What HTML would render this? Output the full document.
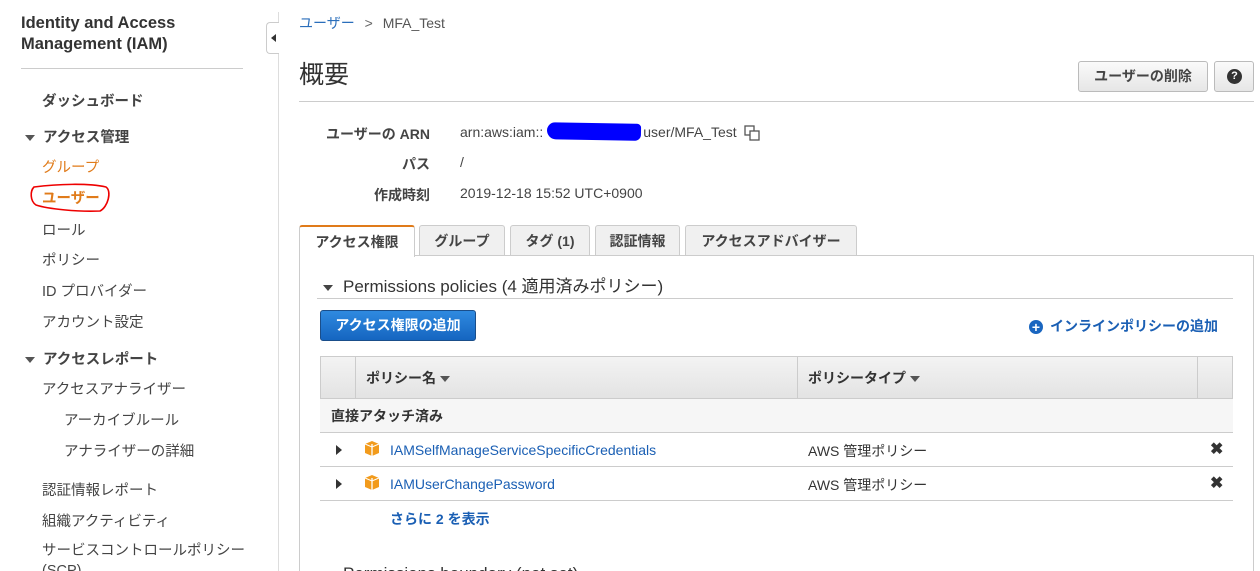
<!DOCTYPE html>
<html><head><meta charset="utf-8"><style>
*{margin:0;padding:0;box-sizing:border-box}
html,body{width:1260px;height:571px;overflow:hidden}
body{background:#fff;font-family:"Liberation Sans","Noto Sans CJK JP",sans-serif;color:#333;font-size:14px;position:relative}
.a{position:absolute;white-space:nowrap}
.nav{font-size:14.5px;color:#444}
.b{font-weight:bold}
.link{color:#1a5fb4}
.tab{position:absolute;top:225px;height:31px;border:1px solid #ccc;border-bottom:none;background:#f0f0f0;border-radius:3px 3px 0 0;font-size:14px;font-weight:bold;color:#444;text-align:center;line-height:30px}
.tri{display:inline-block;width:0;height:0;border-left:5px solid transparent;border-right:5px solid transparent;border-top:6px solid #444;vertical-align:middle}
.rt{display:inline-block;width:0;height:0;border-top:5px solid transparent;border-bottom:5px solid transparent;border-left:6px solid #333}
.hl{position:absolute;height:1px;background:#ccc}
</style></head><body>
<div class="a b" style="left:21px;top:13px;font-size:16.5px;line-height:21px;color:#333">Identity and Access<br>Management (IAM)</div>
<div class="hl" style="left:21px;top:68px;width:222px"></div>
<div class="a nav b" style="left:42px;top:90px">ダッシュボード</div>
<div class="a nav b" style="left:25px;top:126px"><span class="tri" style="margin-right:8px;border-top-color:#555"></span>アクセス管理</div>
<div class="a nav" style="left:42px;top:156px;color:#e07b1a">グループ</div>
<div class="a nav b" style="left:42px;top:187px;color:#e07b1a">ユーザー</div>
<svg class="a" style="left:28px;top:181px" width="84" height="34"><path d="M6 6 C30 3 60 2 78 6 C84 10 80 26 72 30 C50 31 20 28 8 24 C2 20 2 10 6 6Z" fill="none" stroke="#e00" stroke-width="1.6"/></svg>
<div class="a nav" style="left:42px;top:219px">ロール</div>
<div class="a nav" style="left:42px;top:249px">ポリシー</div>
<div class="a nav" style="left:42px;top:280px">ID プロバイダー</div>
<div class="a nav" style="left:42px;top:311px">アカウント設定</div>
<div class="a nav b" style="left:25px;top:348px"><span class="tri" style="margin-right:8px;border-top-color:#555"></span>アクセスレポート</div>
<div class="a nav" style="left:42px;top:378px">アクセスアナライザー</div>
<div class="a nav" style="left:64px;top:409px">アーカイブルール</div>
<div class="a nav" style="left:64px;top:440px">アナライザーの詳細</div>
<div class="a nav" style="left:42px;top:479px">認証情報レポート</div>
<div class="a nav" style="left:42px;top:510px">組織アクティビティ</div>
<div class="a nav" style="left:42px;top:541px;line-height:20px">サービスコントロールポリシー<br>(SCP)</div>
<div class="a" style="left:278px;top:12px;width:1px;height:570px;background:#ddd"></div>
<div class="a" style="left:266px;top:22px;width:13px;height:32px;border:1px solid #ccc;border-right:none;border-radius:4px 0 0 4px;background:#fff"></div>
<div class="a" style="left:271px;top:34px;width:0;height:0;border-top:4px solid transparent;border-bottom:4px solid transparent;border-right:5px solid #333"></div>

<div class="a" style="left:299px;top:13px;font-size:14px"><span class="link" style="color:#2a6ebb">ユーザー</span> <span style="color:#666;margin:0 6px">&gt;</span> <span style="color:#555">MFA_Test</span></div>
<div class="a" style="left:299px;top:55px;font-size:25px;color:#333">概要</div>
<div class="a" style="left:1078px;top:61px;width:130px;height:31px;border:1px solid #bbb;border-radius:3px;background:linear-gradient(#fafafa,#e6e6e6);font-size:14px;font-weight:bold;color:#444;text-align:center;line-height:29px">ユーザーの削除</div>
<div class="a" style="left:1214px;top:61px;width:40px;height:31px;border:1px solid #bbb;border-radius:3px;background:linear-gradient(#fafafa,#e6e6e6)"><div style="position:absolute;left:12px;top:7px;width:15px;height:15px;border-radius:50%;background:#333;color:#fff;font-size:11px;font-weight:bold;text-align:center;line-height:15px">?</div></div>
<div class="hl" style="left:299px;top:101px;width:955px"></div>

<div class="a b" style="left:326px;top:124px;color:#444">ユーザーの ARN</div>
<div class="a" style="left:460px;top:124px;color:#444">arn:aws:iam::<span style="display:inline-block;width:100px"></span>user/MFA_Test</div>
<div class="a" style="left:547px;top:123px;width:94px;height:17px;background:#0000ff;border-radius:8px 4px 6px 9px;transform:rotate(1deg)"></div>
<svg class="a" style="left:744px;top:125px" width="16" height="16"><rect x="1" y="1" width="9" height="9" fill="#fff" stroke="#555" stroke-width="1.3"/><rect x="6" y="6" width="9" height="9" fill="#fff" stroke="#555" stroke-width="1.3"/></svg>
<div class="a b" style="left:402px;top:154px;color:#444">パス</div>
<div class="a" style="left:460px;top:154px;color:#444">/</div>
<div class="a b" style="left:374px;top:185px;color:#444">作成時刻</div>
<div class="a" style="left:460px;top:185px;color:#444">2019-12-18 15:52 UTC+0900</div>

<div class="tab" style="left:299px;width:116px;background:#fff;border-top:2px solid #e07b1a;height:32px;z-index:2">アクセス権限</div>
<div class="tab" style="left:419px;width:86px">グループ</div>
<div class="tab" style="left:510px;width:80px">タグ (1)</div>
<div class="tab" style="left:595px;width:85px">認証情報</div>
<div class="tab" style="left:685px;width:172px">アクセスアドバイザー</div>
<div class="a" style="left:299px;top:255px;width:955px;height:400px;border:1px solid #ccc"></div>

<div class="a" style="left:323px;top:272px;font-size:17px;color:#333"><span class="tri" style="margin-right:10px;border-top-color:#444"></span>Permissions policies (4 適用済みポリシー)</div>
<div class="hl" style="left:317px;top:298px;width:916px"></div>
<div class="a" style="left:320px;top:310px;width:156px;height:31px;border:1px solid #1a4e8a;border-radius:3px;background:linear-gradient(#2f8ae0,#1565c0);color:#fff;font-weight:bold;font-size:14px;text-align:center;line-height:29px">アクセス権限の追加</div>
<div class="a b" style="left:1029px;top:316px;color:#1a5fb4;font-size:14px"><span style="display:inline-block;width:14px;height:14px;border-radius:50%;background:#1a66c0;color:#fff;font-size:14px;font-weight:bold;line-height:14px;text-align:center;vertical-align:-1px;margin-right:7px">+</span>インラインポリシーの追加</div>

<div class="a" style="left:320px;top:356px;width:913px;height:43px;border:1px solid #ccc;background:linear-gradient(#f3f3f3,#e3e3e3)"></div>
<div class="a" style="left:355px;top:357px;width:1px;height:41px;background:#ccc"></div>
<div class="a" style="left:797px;top:357px;width:1px;height:41px;background:#ccc"></div>
<div class="a" style="left:1197px;top:357px;width:1px;height:41px;background:#ccc"></div>
<div class="a b" style="left:366px;top:368px;color:#333">ポリシー名 <span class="tri" style="border-top-color:#555"></span></div>
<div class="a b" style="left:808px;top:368px;color:#333">ポリシータイプ <span class="tri" style="border-top-color:#555"></span></div>
<div class="a" style="left:320px;top:399px;width:913px;height:33px;background:#f6f6f6"></div>
<div class="a b" style="left:331px;top:406px;color:#333">直接アタッチ済み</div>
<div class="hl" style="left:320px;top:432px;width:913px"></div>
<div class="hl" style="left:320px;top:466px;width:913px"></div>
<div class="hl" style="left:320px;top:500px;width:913px"></div>

<div class="a rt" style="left:336px;top:445px"></div>
<svg class="a" style="left:364px;top:440px" width="16" height="16"><path d="M8 1 L15 4 L15 13 L8 16 L1 13 L1 4Z" fill="#f29b1c"/><path d="M8 4 L8 16" stroke="#fff" stroke-width="1.3"/><path d="M1 4 L8 7 L15 4" fill="none" stroke="#fff" stroke-width="1"/></svg>
<div class="a link" style="left:390px;top:442px">IAMSelfManageServiceSpecificCredentials</div>
<div class="a" style="left:808px;top:441px;color:#333">AWS 管理ポリシー</div>
<div class="a b" style="left:1210px;top:439px;font-size:16px;color:#333">✖</div>

<div class="a rt" style="left:336px;top:479px"></div>
<svg class="a" style="left:364px;top:474px" width="16" height="16"><path d="M8 1 L15 4 L15 13 L8 16 L1 13 L1 4Z" fill="#f29b1c"/><path d="M8 4 L8 16" stroke="#fff" stroke-width="1.3"/><path d="M1 4 L8 7 L15 4" fill="none" stroke="#fff" stroke-width="1"/></svg>
<div class="a link" style="left:390px;top:476px">IAMUserChangePassword</div>
<div class="a" style="left:808px;top:475px;color:#333">AWS 管理ポリシー</div>
<div class="a b" style="left:1210px;top:473px;font-size:16px;color:#333">✖</div>

<div class="a b link" style="left:390px;top:509px">さらに 2 を表示</div>
<div class="a" style="left:323px;top:564px;font-size:17px;color:#333"><span class="tri" style="margin-right:10px"></span>Permissions boundary (not set)</div>
</body></html>
